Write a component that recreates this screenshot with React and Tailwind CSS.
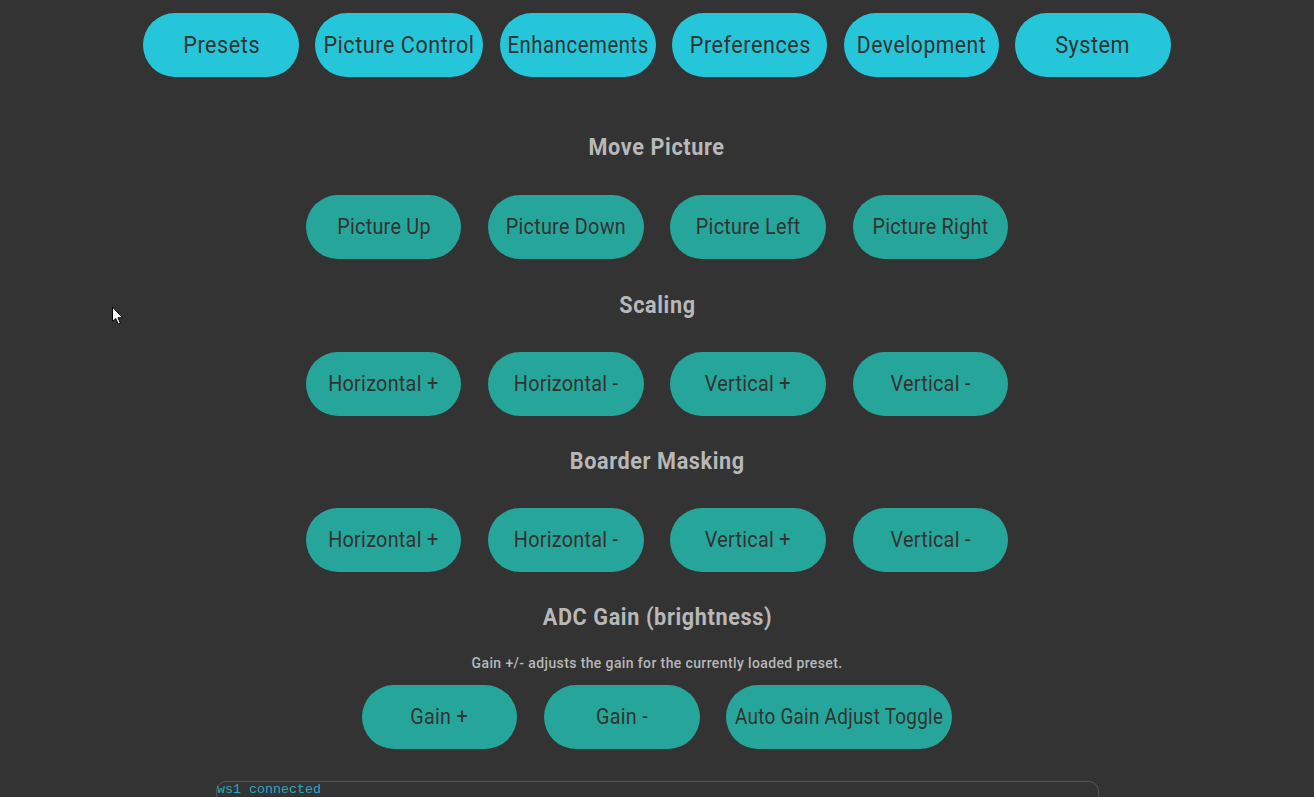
import React from 'react'

const navItems = [
  { label: 'Presets', w: 'w-[156px]', sx: 'scale-x-90' },
  { label: 'Picture Control', w: 'w-[168px]', sx: 'scale-x-90' },
  { label: 'Enhancements', w: 'w-[156.7px]', sx: 'scale-x-[0.85]' },
  { label: 'Preferences', w: 'w-[155px]', sx: 'scale-x-90' },
  { label: 'Development', w: 'w-[155px]', sx: 'scale-x-[0.88]' },
  { label: 'System', w: 'w-[156px]', sx: 'scale-x-90' },
]

const NavButton = ({ label, w, sx }) => (
  <button className={`${w} h-16 rounded-[32px] bg-[#26c6da] text-[#333333] text-[24px] tracking-[0.6px] whitespace-nowrap flex items-center justify-center font-['Roboto',sans-serif]`}>
    <span className={`inline-block ${sx}`}>{label}</span>
  </button>
)

const ActionButton = ({ label, w = 'w-[155.6px]', sx = 'scale-x-90' }) => (
  <button className={`${w} h-16 rounded-[32px] bg-[#26a69a] text-[#333333] text-[22px] tracking-[0.3px] whitespace-nowrap flex items-center justify-center pb-0.5 font-['Roboto',sans-serif]`}>
    <span className={`inline-block ${sx}`}>{label}</span>
  </button>
)

const Heading = ({ children }) => (
  <h2 className="text-[24px] leading-8 font-bold tracking-[0.7px] text-[#b8b8b8] text-center font-['Roboto',sans-serif]">
    <span className="inline-block scale-x-90">{children}</span>
  </h2>
)

const Row = ({ labels }) => (
  <div className="flex justify-center gap-[26.7px]">
    {labels.map((l) => <ActionButton key={l} label={l} />)}
  </div>
)

const App = () => {
  return (
    <div className="relative h-[797px] overflow-hidden bg-[#333333]">
      <nav className="flex justify-center gap-[16.2px] pt-[13px]">
        {navItems.map((n) => <NavButton key={n.label} {...n} />)}
      </nav>

      <section className="mt-[54px]">
        <Heading>Move Picture</Heading>
        <div className="mt-[32px]">
          <Row labels={['Picture Up', 'Picture Down', 'Picture Left', 'Picture Right']} />
        </div>
      </section>

      <section className="mt-[30px]">
        <Heading>Scaling</Heading>
        <div className="mt-[31px]">
          <Row labels={['Horizontal +', 'Horizontal -', 'Vertical +', 'Vertical -']} />
        </div>
      </section>

      <section className="mt-[29px]">
        <Heading>Boarder Masking</Heading>
        <div className="mt-[31px]">
          <Row labels={['Horizontal +', 'Horizontal -', 'Vertical +', 'Vertical -']} />
        </div>
      </section>

      <section className="mt-[29px]">
        <Heading>ADC Gain (brightness)</Heading>
        <p className="mt-[20px] text-[15.5px] leading-5 font-medium tracking-[0.44px] text-[#b8b8b8] text-center font-['Roboto',sans-serif]">
          <span className="inline-block scale-x-90">Gain +/- adjusts the gain for the currently loaded preset.</span>
        </p>
        <div className="mt-[12px] flex justify-center gap-[26.7px]">
          <ActionButton label="Gain +" />
          <ActionButton label="Gain -" />
          <ActionButton label="Auto Gain Adjust Toggle" w="w-[226px]" sx="scale-x-[0.86]" />
        </div>
      </section>

      <div className="mt-8 ml-[216px] w-[883px] h-[40px] rounded-[10px] border border-[#555555]">
        <pre className="text-[13.33px] leading-[15px] text-[#26a9c6] font-['Liberation_Mono',monospace]">ws1 connected</pre>
      </div>

      <svg className="absolute left-[111px] top-[306px]" width="13" height="20" viewBox="0 0 13 20">
        <path d="M1.5 1 V15.5 L4.8 12.6 L7.2 18.2 L9.4 17.2 L7 11.8 H11.5 Z" fill="#fff" stroke="#000" strokeWidth="1" />
      </svg>
    </div>
  )
}

export default App
